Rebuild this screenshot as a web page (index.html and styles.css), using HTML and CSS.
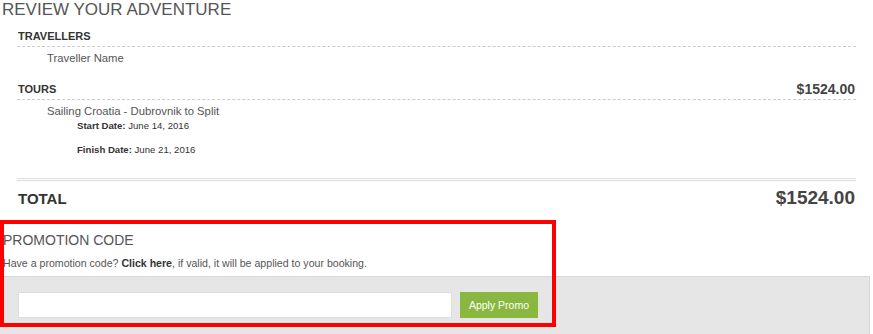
FILE: index.html
```html
<!DOCTYPE html>
<html lang="en">
<head>
    <meta charset="UTF-8">
    <meta name="viewport" content="width=device-width, initial-scale=1.0">
    <title>Review Your Adventure</title>
    <link rel="stylesheet" href="styles.css">
</head>
<body>

<div class="review">
    <h2 class="review-title">REVIEW YOUR ADVENTURE</h2>

    <div class="summary">
        <div class="summary-head">
            <span>TRAVELLERS</span>
        </div>
        <div class="summary-body">
            <div class="item-name">Traveller Name</div>
        </div>

        <div class="summary-head">
            <span>TOURS</span>
            <span class="price">$1524.00</span>
        </div>
        <div class="summary-body">
            <div class="item-name">Sailing Croatia - Dubrovnik to Split</div>
            <div class="item-date start"><b>Start Date:</b> June 14, 2016</div>
            <div class="item-date finish"><b>Finish Date:</b> June 21, 2016</div>
        </div>

        <div class="summary-total">
            <span class="total-label">TOTAL</span>
            <span class="total-price">$1524.00</span>
        </div>
    </div>
</div>

<!-- Promotion code -->
<div class="promo">
    <h2 class="promo-title">PROMOTION CODE</h2>
    <p class="promo-text">Have a promotion code? <b>Click here</b>, if valid, it will be applied to your booking.</p>
    <div class="promo-form">
        <input type="text" class="promo-input" aria-label="Promotion code">
        <button class="promo-button">Apply Promo</button>
    </div>
    <div class="promo-highlight"></div>
</div>

</body>
</html>
```

FILE: styles.css
```css
body {
    margin: 0;
    font-family: "Liberation Sans", Arial, sans-serif;
    color: #555;
    background-color: #fff;
}

.review-title {
    margin: 0;
    padding: 0 0 0 2px;
    font-size: 17px;
    font-weight: normal;
    color: #555;
    line-height: 20px;
}

.summary {
    padding: 0 17px;
}

.summary-head {
    display: flex;
    justify-content: space-between;
    align-items: flex-end;
    padding: 10px 1px 3px 1px;
    border-bottom: 1px dashed #ccc;
    font-size: 11px;
    font-weight: bold;
    color: #333;
    line-height: 13px;
}

.summary-head .price {
    font-size: 14px;
    line-height: 13px;
    color: #444;
}

.summary-body {
    padding: 4px 0 8px 30px;
    font-size: 11.3px;
    color: #555;
}

.item-name {
    line-height: 14px;
}

.item-date {
    padding-left: 30px;
    font-size: 9.6px;
    color: #333;
    line-height: 12px;
}

.item-date.start {
    margin-top: 2px;
}

.item-date.finish {
    margin-top: 12px;
}

.summary-total {
    display: flex;
    justify-content: space-between;
    align-items: baseline;
    margin-top: 14px;
    padding: 5px 1px 0 1px;
    border-top: 3px double #ddd;
    font-weight: bold;
    color: #333;
}

.total-label {
    font-size: 15px;
    line-height: 20px;
}

.total-price {
    font-size: 19px;
    line-height: 24px;
    color: #444;
}

.promo {
    position: relative;
    margin-top: 10px;
}

.promo-title {
    margin: 0;
    padding: 11px 0 0 3px;
    font-size: 14px;
    font-weight: normal;
    color: #555;
    line-height: 18px;
}

.promo-text {
    margin: 0;
    padding: 7px 0 0 3px;
    font-size: 10.6px;
    color: #555;
    line-height: 14px;
}

.promo-text b {
    color: #333;
}

.promo-form {
    display: flex;
    align-items: center;
    gap: 8px;
    margin: 6px 3px 0 0;
    padding: 15px 18px 16px 18px;
    background-color: #e6e6e6;
    border-top: 1px solid #d8d8d8;
    border-right: 1px solid #d8d8d8;
}

.promo-input {
    width: 434px;
    height: 26px;
    margin: 0;
    box-sizing: border-box;
    border: 1px solid #ddd;
    background-color: #fff;
}

.promo-button {
    width: 78px;
    height: 26px;
    padding: 0;
    background-color: #8ab73f;
    color: #fff;
    border: none;
    font-family: "Liberation Sans", Arial, sans-serif;
    font-size: 10.5px;
    cursor: pointer;
}

/* annotation box drawn over the promo block */
.promo-highlight {
    position: absolute;
    left: 0;
    top: 0;
    width: 556px;
    height: 107px;
    box-sizing: border-box;
    border: 4px solid #f00;
    pointer-events: none;
}
```
